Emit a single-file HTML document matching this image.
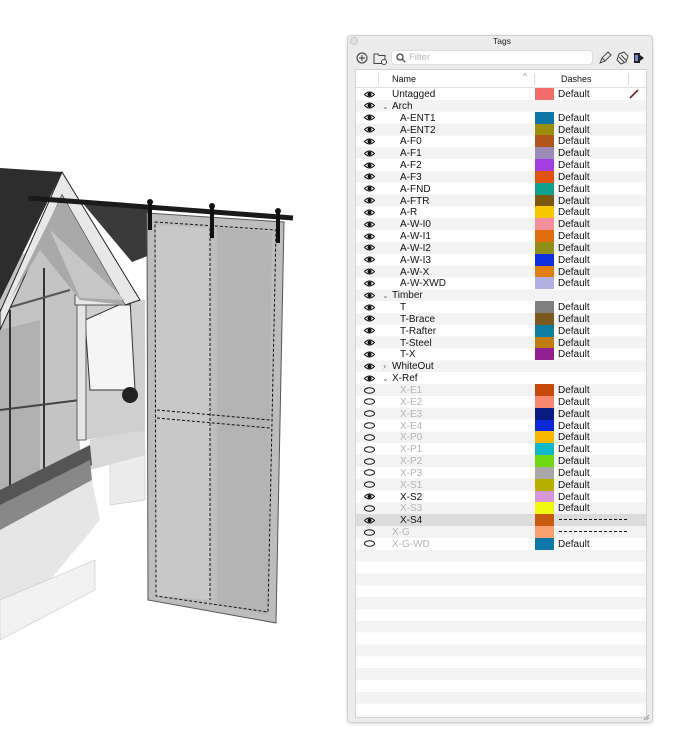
<!DOCTYPE html>
<html><head><meta charset="utf-8"><style>
*{margin:0;padding:0;box-sizing:border-box}
body{width:685px;height:750px;background:#fff;position:relative;overflow:hidden;font-family:"Liberation Sans",Arial,sans-serif;font-size:9.6px;color:#111}
.abs{position:absolute}
#panel{left:347px;top:35px;width:306px;height:688px;background:#ececec;border:1px solid #cfcfcf;border-radius:4px;box-shadow:0 1px 3px rgba(0,0,0,.15)}
#list{left:355px;top:69px;width:292px;height:649px;border:1px solid #d4d4d4;background:repeating-linear-gradient(to bottom,#fff 0,#fff 11.84px,#f3f3f3 11.84px,#f3f3f3 23.68px);background-position:0 18px;overflow:hidden}
#hdr{left:0;top:0;width:290px;height:18px;background:#fff;border-bottom:1px solid #e2e2e2}
.row{position:absolute;left:0;width:290px;height:11.84px;line-height:11.84px}
.nm{position:absolute;top:1px;font-size:10px}
.sw{position:absolute;left:179px;top:0;width:19px;height:11.84px}
.df{position:absolute;left:202px;top:1px;font-size:10px}
.eye{position:absolute;left:8px;top:2.5px}
.off{color:#b5b5b5}
.dash{position:absolute;left:203px;top:5px;width:68px;border-top:1.5px dashed #111}
.chev{position:absolute;left:26px;top:1px;color:#777;font-size:8px}
</style></head><body>
<svg class="abs" style="left:0;top:0" width="345" height="640" viewBox="0 0 345 640">
 <polygon points="0,530 90,470 100,520 0,640" fill="#e6e6e6"/>
 <polygon points="0,600 95,560 95,590 0,640" fill="#f1f1f1" stroke="#bbb" stroke-width=".5"/>
 <polygon points="110,455 145,450 145,500 110,505" fill="#ececec" stroke="#bbb" stroke-width=".5"/>
 <polygon points="90,440 145,425 145,455 90,470" fill="#d8d8d8"/>
 <polygon points="0,260 75,240 80,450 0,490" fill="#c4c4c4"/>
 <polygon points="0,330 40,320 40,470 0,490" fill="#b0b0b0"/>
 <line x1="10" y1="310" x2="10" y2="490" stroke="#333" stroke-width="2"/>
 <line x1="44" y1="268" x2="44" y2="470" stroke="#333" stroke-width="2"/>
 <line x1="0" y1="310" x2="70" y2="290" stroke="#555" stroke-width="2"/>
 <line x1="0" y1="410" x2="80" y2="400" stroke="#444" stroke-width="2"/>
 <polygon points="0,490 90,445 92,465 0,520" fill="#555"/>
 <polygon points="0,505 90,460 92,480 0,530" fill="#888"/>
 <polygon points="80,300 145,300 145,430 85,440" fill="#cfcfcf"/>
 <polygon points="85,320 130,300 135,390 90,390" fill="#f5f5f5" stroke="#333" stroke-width="1"/>
 <circle cx="130" cy="395" r="8" fill="#222"/>
 <rect x="77" y="290" width="9" height="150" fill="#e5e5e5" stroke="#444" stroke-width=".8"/>
 <rect x="75" y="295" width="55" height="10" fill="#e8e8e8" stroke="#333" stroke-width=".8"/>
 <polygon points="80,200 150,205 150,255 132,262" fill="#3a3a3a"/>
 <polygon points="0,168 62,172 0,300" fill="#2d2d2d"/>
 <polygon points="62,172 140,300 125,305 62,195 0,330 0,312" fill="#e8e8e8" stroke="#222" stroke-width="1"/>
 <polygon points="62,195 125,305 80,300 40,250 10,300 0,320" fill="#a9a9a9"/>
 <polygon points="50,230 125,300 80,298" fill="#c6c6c6"/>
 <polygon points="147,213 284,222 276,623 148,600" fill="#bdbdbd" stroke="#555" stroke-width="1"/>
 <polygon points="155,225 210,228 210,600 155,595" fill="#c8c8c8"/>
 <polygon points="217,228 272,232 268,615 217,605" fill="#b4b4b4"/>
 <polygon points="155,222 276,230 268,612 156,596" fill="none" stroke="#111" stroke-width="1" stroke-dasharray="3,2"/>
 <line x1="210" y1="228" x2="210" y2="600" stroke="#111" stroke-dasharray="3,2"/>
 <line x1="157" y1="410" x2="270" y2="420" stroke="#111" stroke-dasharray="3,2"/>
 <line x1="157" y1="418" x2="270" y2="428" stroke="#111" stroke-dasharray="3,2"/>
 <line x1="28" y1="198" x2="293" y2="218" stroke="#1a1a1a" stroke-width="5"/>
 <circle cx="150" cy="202" r="3" fill="#111"/><circle cx="212" cy="206" r="3" fill="#111"/><circle cx="278" cy="211" r="3" fill="#111"/>
 <rect x="148" y="202" width="4" height="28" fill="#111"/><rect x="210" y="206" width="4" height="32" fill="#111"/><rect x="276" y="211" width="4" height="32" fill="#111"/>
</svg>

<div id="panel" class="abs"></div>
<div class="abs" style="left:350px;top:37px;width:8px;height:8px;border-radius:50%;border:1px solid #c8c8c8;background:#e0e0e0"></div>
<div class="abs" style="left:493px;top:36px;font-size:8.5px;color:#222">Tags</div>
<svg class="abs" style="left:355px;top:51px" width="35" height="14"><circle cx="7" cy="7" r="5" fill="none" stroke="#333" stroke-width="1"/><path d="M7 4v6M4 7h6" stroke="#333"/><path d="M19 3h4l1 1.5h6v8h-11z" fill="none" stroke="#444"/><circle cx="29" cy="11" r="2.5" fill="#fff" stroke="#444"/></svg>
<div class="abs" style="left:391px;top:50px;width:202px;height:15px;background:#fff;border-radius:4px;border:1px solid #ddd"></div>
<svg class="abs" style="left:396px;top:53px" width="10" height="10"><circle cx="4" cy="4" r="3" fill="none" stroke="#444" stroke-width="1.3"/><path d="M6.2 6.2l3 3" stroke="#444" stroke-width="1.3"/></svg>
<div class="abs" style="left:409px;top:52px;color:#b8b8b8;font-size:9.5px">Filter</div>
<svg class="abs" style="left:597px;top:50px" width="50" height="16"><path d="M3 13l2-5 6-6 3 3-6 6z M5 8l3 3" fill="none" stroke="#444"/><path d="M22 4l5-2 4 4-2 6-5 2-4-4z M22 7l5 5 M24 5l5 5" fill="none" stroke="#444"/><path d="M37 3h6v10h-6z" fill="#222"/><path d="M43 5l4 3-4 3z" fill="#222"/><path d="M38 5h3v6h-3z" fill="#6a8ad0"/></svg>

<div id="list" class="abs">
 <div id="hdr" class="abs">
  <div class="abs" style="left:22px;top:3px;width:1px;height:12px;background:#ddd"></div>
  <div class="abs" style="left:36px;top:4px;font-size:9px">Name</div>
  <div class="abs" style="left:167px;top:2px;font-size:8px;color:#888">^</div>
  <div class="abs" style="left:178px;top:3px;width:1px;height:12px;background:#ddd"></div>
  <div class="abs" style="left:205px;top:4px;font-size:9px">Dashes</div>
  <div class="abs" style="left:272px;top:3px;width:1px;height:12px;background:#ddd"></div>
 </div>
</div>
<div class="abs" style="left:356px;top:88px;width:290px;height:470px" id="rows">
<div class="row" style="top:0px"><svg class="eye" width="11" height="7"><path d="M0.5 3.5Q5.5-1.5 10.5 3.5Q5.5 8.5 0.5 3.5z" fill="#fff" stroke="#111"/><circle cx="5.5" cy="3.5" r="2" fill="#111"/></svg><span class="nm" style="left:36px">Untagged</span><span class="sw" style="background:#f46c6a"></span><span class="df">Default</span><svg class="abs" style="left:273px;top:1px" width="10" height="10"><path d="M1 9l8-8" stroke="#7a1a1a" stroke-width="1.6"/></svg></div>
</div>
<script>
var R=[["Arch",1,1,null],["A-ENT1",2,1,"#0e77a8"],["A-ENT2",2,1,"#9a8f0c"],["A-F0",2,1,"#b0561a"],["A-F1",2,1,"#9a8cb6"],["A-F2",2,1,"#a43ee0"],["A-F3",2,1,"#e0520f"],["A-FND",2,1,"#10a08e"],["A-FTR",2,1,"#7a5810"],["A-R",2,1,"#f5c800"],["A-W-I0",2,1,"#f4909e"],["A-W-I1",2,1,"#e06e10"],["A-W-I2",2,1,"#908f1a"],["A-W-I3",2,1,"#1030e0"],["A-W-X",2,1,"#e07e10"],["A-W-XWD",2,1,"#b2b0e0"],["Timber",1,1,null],["T",2,1,"#808080"],["T-Brace",2,1,"#7a5a20"],["T-Rafter",2,1,"#107ea0"],["T-Steel",2,1,"#c07e10"],["T-X",2,1,"#902090"],["WhiteOut",3,1,null],["X-Ref",1,1,null],["X-E1",2,0,"#c84a0a"],["X-E2",2,0,"#f88872"],["X-E3",2,0,"#0a1a80"],["X-E4",2,0,"#0a28d8"],["X-P0",2,0,"#f8b800"],["X-P1",2,0,"#10b8c8"],["X-P2",2,0,"#70d810"],["X-P3",2,0,"#a8a8a8"],["X-S1",2,0,"#b8b000"],["X-S2",2,1,"#d898d8"],["X-S3",2,0,"#f0f810"],["X-S4",4,1,"#c85a10"],["X-G",5,0,"#f8a070"],["X-G-WD",0,0,"#1078a8"]];
var h="";
R.forEach(function(r,k){var i=k+1,t=(i*11.84).toFixed(2),lv=r[1],on=r[2];
var bg=lv==4?"background:#dcdcdc;":"";
var eye=on?'<svg class="eye" width="11" height="7"><path d="M0.5 3.5Q5.5-1.5 10.5 3.5Q5.5 8.5 0.5 3.5z" fill="#fff" stroke="#111"/><circle cx="5.5" cy="3.5" r="2" fill="#111"/></svg>':'<svg class="eye" width="11" height="7"><ellipse cx="5.5" cy="3.5" rx="5" ry="2.8" fill="none" stroke="#111"/></svg>';
var x=(lv==2||lv==4)?44:36;
var name='<span class="nm'+(on?'':' off')+'" style="left:'+x+'px">'+r[0]+'</span>';
var chev=lv==1?'<span class="chev">&#8964;</span>':(lv==3?'<span class="chev" style="font-size:9px;left:27px">&#8250;</span>':'');
var sw=r[3]?'<span class="sw" style="background:'+r[3]+'"></span>':'';
var df=r[3]?((lv==4||lv==5)?'<span class="dash"></span>':'<span class="df">Default</span>'):'';
h+='<div class="row" style="top:'+t+'px;'+bg+'">'+eye+chev+name+sw+df+'</div>';});
document.getElementById("rows").insertAdjacentHTML("beforeend",h);
</script>
<svg class="abs" style="left:643px;top:714px" width="7" height="7"><path d="M1 6l5-5M3.5 6l2.5-2.5" stroke="#999"/></svg>
</body></html>
